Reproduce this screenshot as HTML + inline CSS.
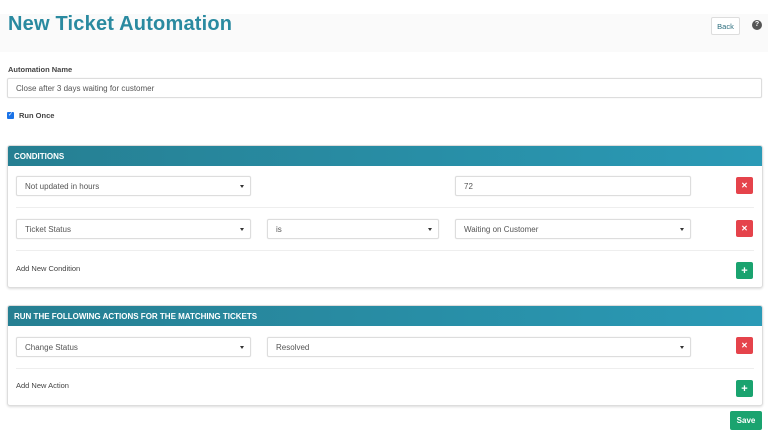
<!DOCTYPE html>
<html><head><style>
*{box-sizing:border-box;margin:0;padding:0}
body{width:768px;height:448px;background:#fff;font-family:"Liberation Sans",sans-serif;position:relative;overflow:hidden;color:#333}
.a{position:absolute}
.hdr{left:0;top:14px;width:768px;height:38px;background:#fafafa}
h1{position:absolute;left:8px;top:-1px;font-size:20px;font-weight:bold;color:#2a8aa0;letter-spacing:0.2px}
.inp{position:absolute;border:1px solid #ddd;border-radius:2px;background:#fff;font-size:8px;color:#555;padding-left:8px;display:flex;align-items:center;box-shadow:0 0 1px #ddd}
.sel::after{content:"";position:absolute;right:6px;top:8px;border:2px solid transparent;border-top:3px solid #333}
.panel{position:absolute;left:7px;width:756px;border:1px solid #ddd;border-radius:3px;background:#fff;box-shadow:0 1px 2px #ddd}
.ph{height:20px;background:linear-gradient(90deg,#267f92,#2a9ab6);color:#fff;font-size:8px;font-weight:bold;padding:6px 0 0 6px;border-radius:2px 2px 0 0}
.btn{position:absolute;width:17px;height:17px;border-radius:2px;color:#fff;font-weight:bold;font-size:8px;display:flex;align-items:center;justify-content:center}
.r{background:#e5434b}.g{background:#1aa36f;font-size:11px}
.hr{position:absolute;left:8px;right:8px;height:1px;background:#eee}
.lbl{position:absolute;font-size:7.5px;color:#444}
</style></head><body>
<div class="a hdr"><h1>New Ticket Automation</h1></div>
<div class="a" style="left:711px;top:17px;width:29px;height:18px;border:1px solid #ddd;border-radius:2px;background:#fff;font-size:7.5px;color:#2b6d7d;display:flex;align-items:center;justify-content:center">Back</div>
<div class="a" style="left:752px;top:20px;width:10px;height:10px;border-radius:50%;background:#555;color:#fff;font-size:7px;font-weight:bold;text-align:center;line-height:10px">?</div>
<div class="lbl" style="left:8px;top:65px;font-weight:bold">Automation Name</div>
<div class="inp" style="left:7px;top:78px;width:755px;height:20px">Close after 3 days waiting for customer</div>
<div class="a" style="left:7px;top:112px;width:7px;height:7px;background:#1a73e8;border-radius:1px;color:#fff;font-size:6px;line-height:7px;text-align:center">✓</div>
<div class="lbl" style="left:19px;top:111px;font-weight:bold">Run Once</div>

<div class="panel" style="top:145px;height:143px">
<div class="ph">CONDITIONS</div>
<div class="inp sel" style="left:8px;top:30px;width:235px;height:20px">Not updated in hours</div>
<div class="inp" style="left:447px;top:30px;width:236px;height:20px">72</div>
<div class="btn r" style="left:728px;top:31px">✕</div>
<div class="hr" style="top:61px"></div>
<div class="inp sel" style="left:8px;top:73px;width:235px;height:20px">Ticket Status</div>
<div class="inp sel" style="left:259px;top:73px;width:172px;height:20px">is</div>
<div class="inp sel" style="left:447px;top:73px;width:236px;height:20px">Waiting on Customer</div>
<div class="btn r" style="left:728px;top:74px">✕</div>
<div class="hr" style="top:104px"></div>
<div class="lbl" style="left:8px;top:118px">Add New Condition</div>
<div class="btn g" style="left:728px;top:116px">+</div>
</div>

<div class="panel" style="top:305px;height:101px">
<div class="ph">RUN THE FOLLOWING ACTIONS FOR THE MATCHING TICKETS</div>
<div class="inp sel" style="left:8px;top:31px;width:235px;height:20px">Change Status</div>
<div class="inp sel" style="left:259px;top:31px;width:424px;height:20px">Resolved</div>
<div class="btn r" style="left:728px;top:31px">✕</div>
<div class="hr" style="top:62px"></div>
<div class="lbl" style="left:8px;top:75px">Add New Action</div>
<div class="btn g" style="left:728px;top:74px">+</div>
</div>
<div class="a" style="left:730px;top:411px;width:32px;height:19px;background:#1aa36f;border-radius:2px;color:#fff;font-size:8px;font-weight:bold;display:flex;align-items:center;justify-content:center">Save</div>
</body></html>
